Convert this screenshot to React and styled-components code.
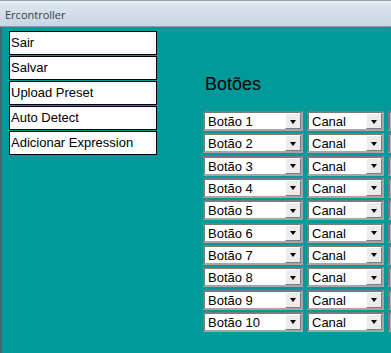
import React from "react";
import styled, { createGlobalStyle } from "styled-components";

const GlobalStyle = createGlobalStyle`
  html, body {
    margin: 0;
    padding: 0;
    background: #009a9a;
  }
  * {
    box-sizing: border-box;
  }
`;

const menuItems = ["Sair", "Salvar", "Upload Preset", "Auto Detect", "Adicionar Expression"];
const buttons = Array.from({ length: 10 }, (_, i) => `Botão ${i + 1}`);

const Window = styled.div`
  width: 391px;
  height: 353px;
  overflow: hidden;
  display: flex;
  flex-direction: column;
  font-family: "Liberation Sans", Arial, sans-serif;
`;

const TitleBar = styled.div`
  height: 27px;
  flex-shrink: 0;
  padding: 1px 0 0 5px;
  display: flex;
  align-items: center;
  background: linear-gradient(#e6ebf1 0px, #e6ebf1 2px, #dbe5ef 3px, #c9d6e3 100%);
  border-top: 1px solid #9aa4ae;
  border-bottom: 1px solid #8d9ba8;
  font-family: "Open Sans", "Noto Sans", sans-serif;
  font-size: 11px;
  color: #3c3c3c;
`;

const Body = styled.div`
  flex: 1;
  display: flex;
  background: #009a9a;
  border-left: 2px solid #3d6b70;
  padding: 4px 0 0 7px;
`;

const Menu = styled.div`
  width: 148px;
  flex-shrink: 0;
  display: flex;
  flex-direction: column;
  gap: 1px;
`;

const MenuButton = styled.div`
  height: 24px;
  line-height: 22px;
  padding-left: 1px;
  background: #ffffff;
  border: 1px solid #000000;
  font-size: 13px;
  color: #000000;
  white-space: nowrap;
`;

const Panel = styled.div`
  margin-left: 46px;
  flex-shrink: 0;
  display: flex;
  flex-direction: column;
`;

const Heading = styled.div`
  margin: 43px 0 16px 2px;
  height: 21px;
  line-height: 21px;
  font-size: 18px;
  color: #000000;
`;

const SelectGrid = styled.div`
  display: grid;
  grid-template-columns: 100px 77px 100px;
  column-gap: 4px;
  row-gap: 2.33px;
`;

const SelectBox = styled.div`
  height: 20px;
  display: flex;
  align-items: stretch;
  background: ${({ $blank }) => ($blank ? "#b8b8b8" : "#ffffff")};
  border: 2px solid;
  border-color: #7a7a7a #a6a6a6 #a6a6a6 #7a7a7a;
`;

const SelectText = styled.div`
  flex: 1;
  padding: 1px 0 0 3px;
  font-size: 13px;
  line-height: 15px;
  color: #000000;
  white-space: nowrap;
  overflow: hidden;
`;

const ArrowButton = styled.div`
  width: 16px;
  flex-shrink: 0;
  display: flex;
  align-items: center;
  justify-content: center;
  background: #ececec;
  border: 1px solid;
  border-color: #ffffff #7c7c7c #7c7c7c #ffffff;
`;

const Triangle = styled.span`
  width: 0;
  height: 0;
  border-left: 3.5px solid transparent;
  border-right: 3.5px solid transparent;
  border-top: 4px solid #000000;
  margin-top: 1px;
`;

const Select = ({ label, blank }) => (
  <SelectBox $blank={blank}>
    <SelectText>{label}</SelectText>
    {!blank && (
      <ArrowButton>
        <Triangle />
      </ArrowButton>
    )}
  </SelectBox>
);

export default function App() {
  return (
    <>
      <GlobalStyle />
      <Window>
        <TitleBar>Ercontroller</TitleBar>
        <Body>
          <Menu>
            {menuItems.map(item => (
              <MenuButton key={item}>{item}</MenuButton>
            ))}
          </Menu>
          <Panel>
            <Heading>Botões</Heading>
            <SelectGrid>
              {buttons.map(b => (
                <React.Fragment key={b}>
                  <Select label={b} />
                  <Select label="Canal" />
                  <Select blank />
                </React.Fragment>
              ))}
            </SelectGrid>
          </Panel>
        </Body>
      </Window>
    </>
  );
}
